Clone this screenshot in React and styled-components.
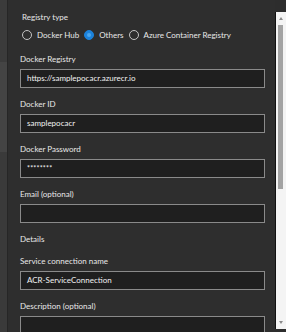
import styled, { createGlobalStyle } from "styled-components";

const GlobalStyle = createGlobalStyle`
  html, body {
    margin: 0;
    padding: 0;
    background: #2d2d2d;
    overflow: hidden;
  }
`;

const Page = styled.div`
  display: flex;
  width: 286px;
  height: 332px;
  font-family: Lato, "Noto Sans", sans-serif;
  font-size: 8px;
  color: #e8e8e8;
`;

const SideStrip = styled.div`
  width: 7px;
  flex-shrink: 0;
  border-right: 1px solid #262626;
  background: linear-gradient(
    to bottom,
    #3b3b3b 0px,
    #3b3b3b 62px,
    #444444 62px,
    #444444 152px,
    #3a3a3a 152px
  );
`;

const Panel = styled.div`
  flex: 1;
  background: #2e2e2e;
  padding: 11px 10px 0 12px;
  overflow: hidden;
`;

const Label = styled.div`
  line-height: 13px;
  height: 13px;
  white-space: nowrap;
  margin-bottom: ${(props) => props.$gap || 3}px;
`;

const RadioRow = styled.div`
  display: flex;
  align-items: center;
  height: 14px;
  margin-top: 4px;
  margin-bottom: 11px;
  padding-left: 2px;
`;

const RadioOption = styled.label`
  display: flex;
  align-items: center;
  gap: 5px;
  margin-right: 5px;
  white-space: nowrap;
`;

const RadioCircle = styled.span`
  width: 10px;
  height: 10px;
  box-sizing: border-box;
  border-radius: 50%;
  border: 1px solid ${(props) => (props.$checked ? "#1b82dc" : "#c4c4c4")};
  background: ${(props) => (props.$checked ? "#1b82dc" : "transparent")};
  display: flex;
  align-items: center;
  justify-content: center;

  &::after {
    content: "";
    display: ${(props) => (props.$checked ? "block" : "none")};
    width: 4px;
    height: 4px;
    border-radius: 50%;
    background: #4aa6ee;
  }
`;

const Field = styled.div`
  margin-bottom: 10px;
`;

const Input = styled.div`
  height: 19px;
  box-sizing: border-box;
  border: 1px solid #8a8a8a;
  background: #1f1f1f;
  padding: 0 6px;
  line-height: 17px;
  color: #f2f2f2;
  white-space: nowrap;
  font-size: ${(props) => (props.$masked ? "7px" : "inherit")};
  letter-spacing: ${(props) => (props.$masked ? "0.2px" : "normal")};
`;

const Scrollbar = styled.div`
  width: 10px;
  flex-shrink: 0;
  margin-top: 12px;
  margin-bottom: 3px;
  border-left: 1px solid #111111;
  background: #f4f4f4;
  display: flex;
  flex-direction: column;
  align-items: center;
`;

const Arrow = styled.div`
  width: 0;
  height: 0;
  margin: 5px 0 5px;
  border-left: 2.5px solid transparent;
  border-right: 2.5px solid transparent;
  ${(props) =>
    props.$down
      ? "border-top: 3px solid #8a8a8a;"
      : "border-bottom: 3px solid #8a8a8a;"}
`;

const Thumb = styled.div`
  width: 5px;
  height: 164px;
  background: #a3a3a3;
  margin-right: 1px;
`;

const Spacer = styled.div`
  flex: 1;
`;

const fields = [
  { label: "Docker Registry", value: "https://samplepocacr.azurecr.io" },
  { label: "Docker ID", value: "samplepocacr" },
  { label: "Docker Password", value: "********", masked: true },
  { label: "Email (optional)", value: "" },
];

const detailFields = [
  { label: "Service connection name", value: "ACR-ServiceConnection" },
  { label: "Description (optional)", value: "" },
];

const radios = [
  { label: "Docker Hub", checked: false },
  { label: "Others", checked: true },
  { label: "Azure Container Registry", checked: false },
];

const App = () => {
  return (
    <>
      <GlobalStyle />
      <Page>
        <SideStrip />
        <Panel>
          <Label $gap={0} style={{ paddingLeft: 2 }}>Registry type</Label>
          <RadioRow>
            {radios.map((radio) => (
              <RadioOption key={radio.label}>
                <RadioCircle $checked={radio.checked} />
                {radio.label}
              </RadioOption>
            ))}
          </RadioRow>

          {fields.map((field) => (
            <Field key={field.label}>
              <Label>{field.label}</Label>
              <Input $masked={field.masked}>{field.value}</Input>
            </Field>
          ))}

          <Label $gap={9}>Details</Label>

          {detailFields.map((field) => (
            <Field key={field.label}>
              <Label>{field.label}</Label>
              <Input>{field.value}</Input>
            </Field>
          ))}
        </Panel>
        <Scrollbar>
          <Arrow />
          <Thumb />
          <Spacer />
          <Arrow $down />
        </Scrollbar>
      </Page>
    </>
  );
};

export default App;
